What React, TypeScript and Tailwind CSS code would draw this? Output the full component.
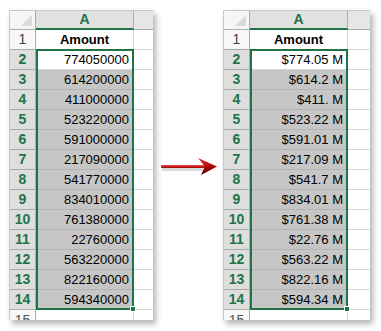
const leftValues = [
  "774050000",
  "614200000",
  "411000000",
  "523220000",
  "591000000",
  "217090000",
  "541770000",
  "834010000",
  "761380000",
  "22760000",
  "563220000",
  "822160000",
  "594340000",
];

const rightValues = [
  "$774.05 M",
  "$614.2 M",
  "$411. M",
  "$523.22 M",
  "$591.01 M",
  "$217.09 M",
  "$541.7 M",
  "$834.01 M",
  "$761.38 M",
  "$22.76 M",
  "$563.22 M",
  "$822.16 M",
  "$594.34 M",
];

function Sheet({ values, extraWidth }: { values: string[]; extraWidth: string }) {
  return (
    <div
      className={`relative h-[310px] overflow-hidden bg-white border-l border-t border-[#c8c8c8] shadow-[3px_4px_6px_rgba(0,0,0,0.3)] ${extraWidth}`}
    >
      {/* header row */}
      <div className="flex h-[19px]">
        <div className="w-[26px] shrink-0 bg-[#f6f6f6] border-r border-b border-[#ababab] relative">
          <div className="absolute right-[3px] bottom-[3px] w-0 h-0 border-l-[11px] border-l-transparent border-b-[11px] border-b-[#dadada]" />
        </div>
        <div className="w-[98px] shrink-0 bg-[#e1e1e1] border-r border-[#ababab] border-b-2 border-b-[#217346] flex items-center justify-center text-[14px] font-bold text-[#217346]">
          A
        </div>
        <div className="flex-1 bg-[#e6e6e6] border-b border-[#ababab]" />
      </div>

      {/* row 1 */}
      <div className="flex h-[20px]">
        <div className="w-[26px] shrink-0 bg-[#f8f8f8] border-r border-b border-[#ababab] flex items-center justify-center text-[14px] text-[#444]">
          1
        </div>
        <div className="w-[98px] shrink-0 border-r border-b border-[#d4d4d4] flex items-center justify-center text-[13px] font-bold text-black">
          Amount
        </div>
        <div className="flex-1 border-b border-[#d4d4d4]" />
      </div>

      {values.map((v, i) => (
        <div key={i} className="flex h-[20px]">
          <div className="w-[26px] shrink-0 bg-[#dedede] border-r border-b border-[#ababab] flex items-center justify-center text-[14px] font-bold text-[#217346]">
            {i + 2}
          </div>
          <div
            className={`w-[98px] shrink-0 border-r border-b border-[#d4d4d4] flex items-center justify-end pr-[4px] text-[13px] text-black ${
              i === 0 ? "bg-white" : "bg-[#c6c6c6] border-b-[#b3b3b3]"
            }`}
          >
            {v}
          </div>
          <div className="flex-1 border-b border-[#d4d4d4]" />
        </div>
      ))}

      {/* row 15, cut off */}
      <div className="flex h-[20px]">
        <div className="w-[26px] shrink-0 bg-[#f8f8f8] border-r border-[#ababab] flex items-center justify-center text-[14px] text-[#555]">
          15
        </div>
        <div className="w-[98px] shrink-0 border-r border-[#d4d4d4]" />
        <div className="flex-1" />
      </div>

      {/* selection outline */}
      <div className="absolute left-[26px] top-[38px] w-[98px] h-[261px] border-2 border-[#217346] pointer-events-none">
        <div className="absolute -right-[4px] -bottom-[4px] w-[6px] h-[6px] bg-[#217346] border border-white" />
      </div>
    </div>
  );
}

function Arrow() {
  return (
    <svg width="60" height="24" viewBox="0 0 60 24">
      <defs>
        <linearGradient id="shaft" x1="0" y1="0" x2="0" y2="1">
          <stop offset="0" stopColor="#e84a4a" />
          <stop offset="1" stopColor="#a80000" />
        </linearGradient>
        <linearGradient id="head" x1="0" y1="0" x2="0" y2="1">
          <stop offset="0" stopColor="#e03030" />
          <stop offset="0.5" stopColor="#b00000" />
          <stop offset="1" stopColor="#4a0000" />
        </linearGradient>
      </defs>
      <rect x="2" y="11" width="44" height="3" fill="#000" opacity="0.15" transform="translate(1,2)" />
      <rect x="2" y="10" width="44" height="3" rx="1" fill="url(#shaft)" />
      <path d="M39 3 L58 11.5 L42 20 L46 11.5 Z" fill="url(#head)" />
    </svg>
  );
}

export default function App() {
  return (
    <div
      className="w-[381px] h-[331px] bg-white flex items-start pl-[9px] pt-[10px]"
      style={{ fontFamily: '"Liberation Sans", Arial, sans-serif' }}
    >
      <Sheet values={leftValues} extraWidth="w-[144px]" />
      <div className="w-[70px] h-[310px] flex items-center pl-[6px]">
        <div className="mt-[4px]">
          <Arrow />
        </div>
      </div>
      <Sheet values={rightValues} extraWidth="w-[147px]" />
    </div>
  );
}
